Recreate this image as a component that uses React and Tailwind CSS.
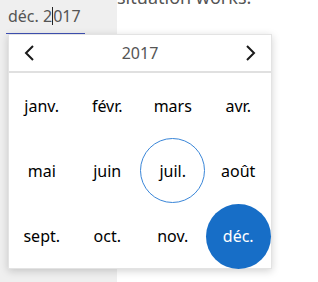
import React from "react";

const months = [
  "janv.", "févr.", "mars", "avr.",
  "mai", "juin", "juil.", "août",
  "sept.", "oct.", "nov.", "déc.",
];

const Chevron = ({ dir }) => (
  <svg width="14" height="18" viewBox="0 0 14 18" fill="none">
    <polyline
      points={dir === "left" ? "10,2 3,9 10,16" : "4,2 11,9 4,16"}
      stroke="#1a1a1a"
      strokeWidth="2"
    />
  </svg>
);

const App = () => {
  return (
    <div className="relative flex w-[318px] h-[282px] overflow-hidden bg-white font-['Noto_Sans',sans-serif]">
      <div className="w-[117px] h-full bg-[#efefef]">
        <div className="pl-[2px] pt-[3px] w-[79px] ml-[6px] border-b border-[#3f51b5] h-[34px] box-border">
          <span className="text-[16px] text-[#555] leading-[26px]">
            déc. 2<span className="inline-block w-px h-[18px] bg-[#222] align-[-3px]"></span>017
          </span>
        </div>
      </div>
      <div className="flex-1">
        <p className="-mt-[14px] text-[18px] text-[#555] leading-[22px]">situation works.</p>
      </div>

      <div className="absolute left-[8px] top-[34px] w-[264px] h-[235px] bg-white border border-[#e3e3e3] shadow-[0_2px_8px_rgba(0,0,0,0.18)]">
        <div className="flex items-center justify-between h-[38px] px-[14px] border-b-2 border-[#e0e0e0]">
          <Chevron dir="left" />
          <span className="text-[16px] text-[#555]">2017</span>
          <Chevron dir="right" />
        </div>
        <div className="grid grid-cols-4 grid-rows-3 h-[196px]">
          {months.map((m) => (
            <div key={m} className="flex items-center justify-center">
              <div
                className={
                  m === "juil."
                    ? "flex items-center justify-center w-[65px] h-[65px] rounded-full border border-[#3a86d8] text-[16px] text-black"
                    : m === "déc."
                    ? "flex items-center justify-center w-[65px] h-[65px] rounded-full bg-[#176ec7] text-[16px] text-white"
                    : "flex items-center justify-center w-[65px] h-[65px] text-[16px] text-black"
                }
              >
                {m}
              </div>
            </div>
          ))}
        </div>
      </div>
    </div>
  );
};

export default App;
